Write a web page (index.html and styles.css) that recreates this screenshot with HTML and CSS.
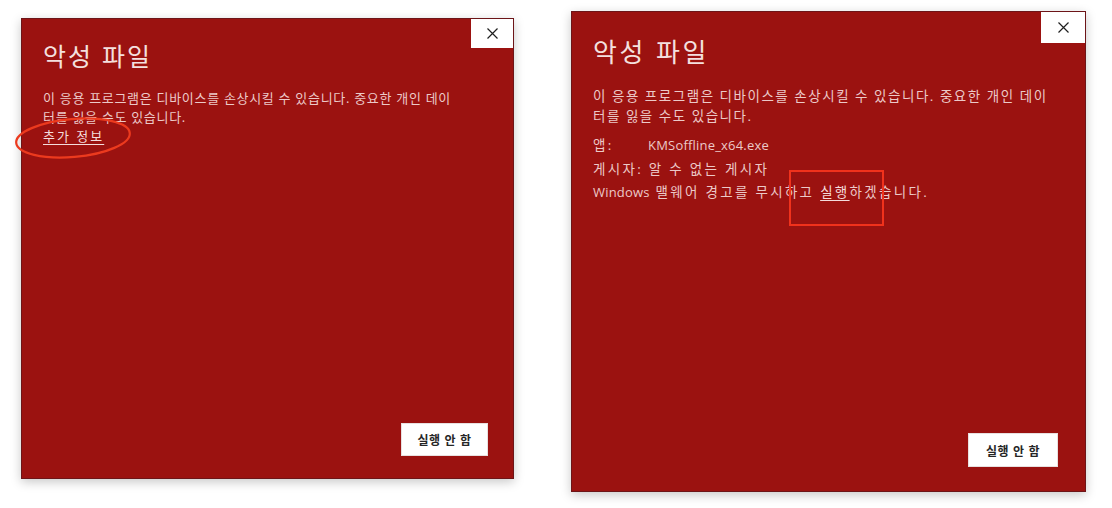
FILE: index.html
```html
<!DOCTYPE html>
<html lang="ko">
<head>
<meta charset="utf-8">
<title>악성 파일</title>
<link rel="stylesheet" href="styles.css">
</head>
<body>
  <section class="dialog dialog-left">
    <button class="close" aria-label="닫기">
      <svg width="11" height="11" viewBox="0 0 11 11"><path d="M0.5 0.5 L10.5 10.5 M10.5 0.5 L0.5 10.5" stroke="#1f1f1f" stroke-width="1.2" fill="none"/></svg>
    </button>
    <h1 class="title">악성 파일</h1>
    <p class="body">이 응용 프로그램은 디바이스를 손상시킬 수 있습니다. 중요한 개인 데이<br>터를 잃을 수도 있습니다.</p>
    <a class="more">추가 정보</a>
    <div class="actions"><button class="btn">실행 안 함</button></div>
    <svg class="mark-ellipse" width="122" height="46" viewBox="0 0 122 46"><ellipse cx="61" cy="23" rx="57" ry="19" fill="none" stroke="#ec3a1e" stroke-width="2.2" transform="rotate(-5 61 23)"/></svg>
  </section>

  <section class="dialog dialog-right">
    <button class="close" aria-label="닫기">
      <svg width="11" height="11" viewBox="0 0 11 11"><path d="M0.5 0.5 L10.5 10.5 M10.5 0.5 L0.5 10.5" stroke="#1f1f1f" stroke-width="1.2" fill="none"/></svg>
    </button>
    <h1 class="title">악성 파일</h1>
    <p class="body">이 응용 프로그램은 디바이스를 손상시킬 수 있습니다. 중요한 개인 데이<br>터를 잃을 수도 있습니다.</p>
    <div class="details">
      <div class="row"><span class="label">앱:</span><span class="latin">KMSoffline_x64.exe</span></div>
      <div class="row"><span>게시자: 알 수 없는 게시자</span></div>
      <div class="row"><span><span class="latin">Windows</span> 맬웨어 경고를 무시하고 <a class="run">실행</a>하겠습니다.</span></div>
    </div>
    <div class="actions"><button class="btn">실행 안 함</button></div>
    <div class="mark-rect"></div>
  </section>
</body>
</html>
```

FILE: styles.css
```css
html, body {
  margin: 0;
  padding: 0;
  background: #ffffff;
}
body {
  width: 1112px;
  height: 508px;
  display: flex;
  align-items: flex-start;
  font-family: "Open Sans", "Noto Sans CJK KR", sans-serif;
  overflow: hidden;
}
.dialog {
  position: relative;
  box-sizing: border-box;
  display: flex;
  flex-direction: column;
  background: #9b1210;
  border: 1px solid #6d1518;
  box-shadow: 0 3px 10px rgba(0, 0, 0, 0.22);
  color: #ecc9c8;
}
.dialog-left {
  width: 493px;
  height: 461px;
  margin: 18px 0 0 21px;
  padding: 21px 0 0 21px;
}
.dialog-right {
  width: 515px;
  height: 481px;
  margin: 11px 0 0 57px;
  padding: 23px 0 0 21px;
}
.close {
  position: absolute;
  top: 0;
  right: 0;
  width: 42px;
  height: 29px;
  border: none;
  padding: 0;
  margin: 0;
  background: #ffffff;
  display: flex;
  align-items: center;
  justify-content: center;
}
.dialog-right .close {
  width: 44px;
  height: 31px;
}
.title {
  margin: 0;
  font-family: "Noto Sans CJK KR", sans-serif;
  font-weight: 400;
  font-size: 25px;
  line-height: 30px;
  letter-spacing: 2px;
  color: #f4e0df;
}
.dialog-right .title {
  font-size: 26px;
  line-height: 32px;
  letter-spacing: 2.6px;
}
.body {
  margin: 19px 0 0 0;
  font-size: 13px;
  line-height: 19px;
  letter-spacing: 0.7px;
  white-space: nowrap;
}
.dialog-right .body {
  margin-top: 20px;
  font-size: 13.5px;
  line-height: 19.5px;
  letter-spacing: 1.52px;
}
.more {
  align-self: flex-start;
  font-size: 13px;
  line-height: 19px;
  letter-spacing: 2px;
  color: #f4dcdc;
  text-decoration: underline;
  text-underline-offset: 3px;
}
.details {
  margin-top: 8px;
  font-size: 13.5px;
  line-height: 23.5px;
  letter-spacing: 2.3px;
  white-space: nowrap;
}
.latin {
  letter-spacing: 0.2px;
  font-size: 13px;
}
.row {
  display: flex;
}
.label {
  width: 55px;
}
.run {
  color: #f4dcdc;
  text-decoration: underline;
  text-underline-offset: 3px;
}
.actions {
  margin-top: auto;
  display: flex;
  justify-content: flex-end;
  padding: 0 25px 22px 0;
}
.dialog-right .actions {
  padding: 0 27px 24px 0;
}
.btn {
  width: 87px;
  height: 33px;
  border: 1px solid #e8e0e0;
  background: #ffffff;
  font-family: "Noto Sans CJK KR", sans-serif;
  font-weight: 700;
  font-size: 12px;
  letter-spacing: 0.5px;
  color: #262626;
  padding: 0;
}
.dialog-right .btn {
  width: 90px;
  height: 34px;
}
.mark-ellipse {
  position: absolute;
  left: -10px;
  top: 96px;
}
.mark-rect {
  position: absolute;
  left: 217px;
  top: 158px;
  width: 91px;
  height: 52px;
  border: 2px solid #f0321c;
}
```
